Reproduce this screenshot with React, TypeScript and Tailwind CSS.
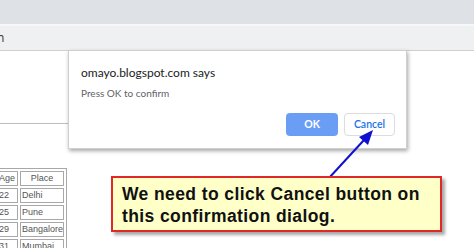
import React from "react";

const rows = [
  ["22", "Delhi"],
  ["25", "Pune"],
  ["29", "Bangalore"],
  ["31", "Mumbai"],
];

export default function App() {
  return (
    <div className="relative w-[474px] h-[248px] overflow-hidden bg-white">
      {/* browser chrome */}
      <div className="h-[24px] bg-[#dee1e6]" />
      <div className="h-[2px] bg-[#f6f7f8]" />
      <div className="h-[24px] bg-[#eef0f2] flex items-center">
        <span className="text-[12px] leading-none text-[#333] -ml-[3px] font-['Open_Sans',sans-serif]">n</span>
      </div>
      {/* page */}
      <div className="border-t border-[#cfcfcf]">
        <div className="w-[68px] h-[73px] border-b border-[#bdbdbd]" />
        <div className="w-[67px] mt-[44px] flex justify-end overflow-hidden">
          <table className="shrink-0 border border-[#a8a8a8] border-separate border-spacing-[2px] font-['Liberation_Sans',sans-serif] text-[9px] leading-none text-[#555]">
            <thead>
              <tr>
                <th className="w-[30px] h-[15px] border border-[#a8a8a8] font-normal">Name</th>
                <th className="w-[21px] h-[15px] border border-[#a8a8a8] font-normal text-left pl-[1px] pr-0">Age</th>
                <th className="w-[44px] h-[15px] border border-[#a8a8a8] font-normal px-0">Place</th>
              </tr>
            </thead>
            <tbody>
              {rows.map(([a, p]) => (
                <tr key={p}>
                  <td className="h-[15px] border border-[#a8a8a8] px-[1px]">x</td>
                  <td className="h-[15px] border border-[#a8a8a8] pl-[1px] pr-0">{a}</td>
                  <td className="h-[15px] border border-[#a8a8a8] pl-[1px] pr-0">{p}</td>
                </tr>
              ))}
            </tbody>
          </table>
        </div>
      </div>

      {/* confirm dialog */}
      <div className="absolute left-[68px] top-[50px] w-[339px] h-[99px] bg-white border border-[#d0d0d0] shadow-[1px_2px_4px_rgba(0,0,0,0.35)] font-['Lato',sans-serif]">
        <div className="pl-[12px] pt-[14px]">
          <div className="text-[12px] leading-[16px] text-[#202124]">omayo.blogspot.com says</div>
          <div className="mt-[5px] text-[10px] leading-[14px] text-[#5f6368]">Press OK to confirm</div>
        </div>
        <div className="absolute right-[11px] top-[62px] flex gap-[6px]">
          <div className="w-[52px] h-[23px] rounded-[4px] bg-[#6a9ef5] text-white text-[10.5px] font-bold flex items-center justify-center">OK</div>
          <div className="w-[51px] h-[23px] rounded-[4px] bg-white border border-[#dadce0] text-[#1a73e8] text-[10.5px] font-semibold flex items-center justify-center">Cancel</div>
        </div>
      </div>

      {/* arrow */}
      <svg className="absolute left-0 top-0" width="474" height="248" viewBox="0 0 474 248">
        <line x1="329" y1="178" x2="364" y2="140" stroke="#1010d0" strokeWidth="2" />
        <polygon points="373,130 368,145 359,137" fill="#1010d0" />
      </svg>

      {/* callout */}
      <div className="absolute left-[111px] top-[176px] w-[331px] h-[56px] bg-[#ffffc8] border-2 border-[#e02828] shadow-[3px_3px_3px_rgba(0,0,0,0.35)] pl-[9px] pt-[5px] font-['Liberation_Sans',sans-serif] font-bold text-[17.5px] tracking-[0.4px] leading-[22px] text-[#111] whitespace-nowrap">
        <div>We need to click Cancel button on</div>
        <div>this confirmation dialog.</div>
      </div>
    </div>
  );
}
